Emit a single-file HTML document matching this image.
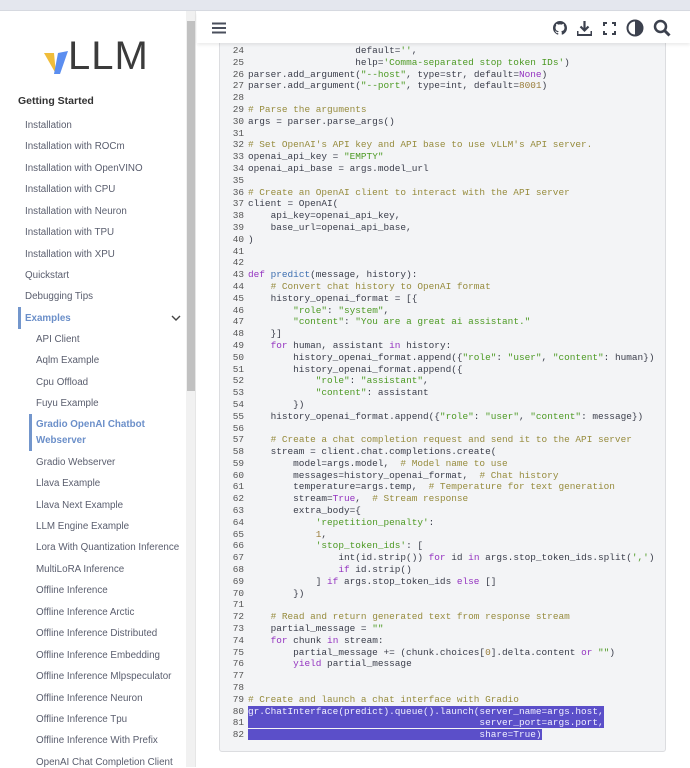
<!DOCTYPE html>
<html><head><meta charset="utf-8"><style>
*{margin:0;padding:0;box-sizing:border-box}
body{width:690px;height:767px;overflow:hidden;background:#fff;position:relative;font-family:"Liberation Sans",sans-serif}
.topbar{position:absolute;left:0;top:0;width:690px;height:11px;background:#e4e7ee;border-bottom:1px solid #d6d9e0;z-index:5}
.side{position:absolute;left:0;top:11px;width:186px;height:756px;background:#fff}
.sb{position:absolute;left:186px;top:11px;width:10px;height:756px;background:#f1f1f1;border-right:1px solid #e6e6e6}
.sb i{position:absolute;left:1px;top:10px;width:8px;height:370px;background:#c1c1c1}
.logo{position:absolute;left:44px;top:23px;font-size:40px;color:#3b3b3b;letter-spacing:1px}
.gs{position:absolute;left:18px;top:95px;font-size:10.5px;font-weight:bold;color:#333}
.it{position:absolute;font-size:9.8px;color:#5a5e6e;white-space:nowrap}
.act{color:#6b8fc9;font-weight:bold}
.bar{position:absolute;width:3px;background:#7396cc}
.hdr{position:absolute;left:197px;top:12px;width:493px;height:31px;background:#fff;box-shadow:0 2px 3px rgba(0,0,0,.08);z-index:3}
.code{position:absolute;left:219px;top:12px;width:447px;height:740px;background:#f3f4f6;border:1px solid #dcdde0;border-radius:3px}
pre{position:absolute;left:222px;top:45px;font-family:"Liberation Mono",monospace;font-size:9.42px;line-height:11.8px;color:#3a3d4a}
.n{display:inline-block;width:22px;text-align:right;margin-right:4px;color:#555}
.c{color:#978c3e}.s{color:#4d9a24}.k{color:#9434c0}.f{color:#3d6fb0}.m{color:#9a7d3a}
.sel{background:#5b4fc9;color:#f0f0ff}
</style></head><body>
<div class="topbar"></div>
<div class="side">
<div class="logo"><svg width="28" height="26" style="position:absolute;left:0;top:16px" viewBox="0 0 28 26"><polygon points="0,3 10,3 12,24" fill="#f0bd3a"/><polygon points="14,3 24,1 16,24 10,24" fill="#5b8ef0"/></svg><span style="margin-left:24px">LLM</span></div>
</div>
<div class="gs">Getting Started</div>
<div class="it" style="left:25px;top:120px">Installation</div>
<div class="it" style="left:25px;top:141px">Installation with ROCm</div>
<div class="it" style="left:25px;top:163px">Installation with OpenVINO</div>
<div class="it" style="left:25px;top:184px">Installation with CPU</div>
<div class="it" style="left:25px;top:206px">Installation with Neuron</div>
<div class="it" style="left:25px;top:227px">Installation with TPU</div>
<div class="it" style="left:25px;top:249px">Installation with XPU</div>
<div class="it" style="left:25px;top:270px">Quickstart</div>
<div class="it" style="left:25px;top:291px">Debugging Tips</div>
<div class="bar" style="left:18px;top:307px;height:22px"></div>
<div class="it act" style="left:25px;top:313px">Examples</div>
<svg style="position:absolute;left:171px;top:315px" width="10" height="7" viewBox="0 0 10 7"><path d="M1 1 L5 5 L9 1" stroke="#444" stroke-width="1.4" fill="none"/></svg>
<div class="it" style="left:36px;top:334px">API Client</div>
<div class="it" style="left:36px;top:355px">Aqlm Example</div>
<div class="it" style="left:36px;top:377px">Cpu Offload</div>
<div class="it" style="left:36px;top:398px">Fuyu Example</div>
<div class="bar" style="left:29px;top:414px;height:37px"></div>
<div class="it act" style="left:36px;top:419px">Gradio OpenAI Chatbot</div>
<div class="it act" style="left:36px;top:435px">Webserver</div>
<div class="it" style="left:36px;top:457px">Gradio Webserver</div>
<div class="it" style="left:36px;top:478px">Llava Example</div>
<div class="it" style="left:36px;top:500px">Llava Next Example</div>
<div class="it" style="left:36px;top:521px">LLM Engine Example</div>
<div class="it" style="left:36px;top:542px">Lora With Quantization Inference</div>
<div class="it" style="left:36px;top:564px">MultiLoRA Inference</div>
<div class="it" style="left:36px;top:585px">Offline Inference</div>
<div class="it" style="left:36px;top:607px">Offline Inference Arctic</div>
<div class="it" style="left:36px;top:628px">Offline Inference Distributed</div>
<div class="it" style="left:36px;top:650px">Offline Inference Embedding</div>
<div class="it" style="left:36px;top:671px">Offline Inference Mlpspeculator</div>
<div class="it" style="left:36px;top:693px">Offline Inference Neuron</div>
<div class="it" style="left:36px;top:714px">Offline Inference Tpu</div>
<div class="it" style="left:36px;top:735px">Offline Inference With Prefix</div>
<div class="it" style="left:36px;top:757px">OpenAI Chat Completion Client</div>
<div class="sb"><i></i></div>
<div class="code"></div>
<pre><span class="n">24</span>                   default=<span class="s">''</span>,
<span class="n">25</span>                   help=<span class="s">'Comma-separated stop token IDs'</span>)
<span class="n">26</span>parser.add_argument(<span class="s">"--host"</span>, type=str, default=<span class="k">None</span>)
<span class="n">27</span>parser.add_argument(<span class="s">"--port"</span>, type=int, default=<span class="m">8001</span>)
<span class="n">28</span>
<span class="n">29</span><span class="c"># Parse the arguments</span>
<span class="n">30</span>args = parser.parse_args()
<span class="n">31</span>
<span class="n">32</span><span class="c"># Set OpenAI's API key and API base to use vLLM's API server.</span>
<span class="n">33</span>openai_api_key = <span class="s">"EMPTY"</span>
<span class="n">34</span>openai_api_base = args.model_url
<span class="n">35</span>
<span class="n">36</span><span class="c"># Create an OpenAI client to interact with the API server</span>
<span class="n">37</span>client = OpenAI(
<span class="n">38</span>    api_key=openai_api_key,
<span class="n">39</span>    base_url=openai_api_base,
<span class="n">40</span>)
<span class="n">41</span>
<span class="n">42</span>
<span class="n">43</span><span class="k">def</span> <span class="f">predict</span>(message, history):
<span class="n">44</span>    <span class="c"># Convert chat history to OpenAI format</span>
<span class="n">45</span>    history_openai_format = [{
<span class="n">46</span>        <span class="s">"role"</span>: <span class="s">"system"</span>,
<span class="n">47</span>        <span class="s">"content"</span>: <span class="s">"You are a great ai assistant."</span>
<span class="n">48</span>    }]
<span class="n">49</span>    <span class="k">for</span> human, assistant <span class="k">in</span> history:
<span class="n">50</span>        history_openai_format.append({<span class="s">"role"</span>: <span class="s">"user"</span>, <span class="s">"content"</span>: human})
<span class="n">51</span>        history_openai_format.append({
<span class="n">52</span>            <span class="s">"role"</span>: <span class="s">"assistant"</span>,
<span class="n">53</span>            <span class="s">"content"</span>: assistant
<span class="n">54</span>        })
<span class="n">55</span>    history_openai_format.append({<span class="s">"role"</span>: <span class="s">"user"</span>, <span class="s">"content"</span>: message})
<span class="n">56</span>
<span class="n">57</span>    <span class="c"># Create a chat completion request and send it to the API server</span>
<span class="n">58</span>    stream = client.chat.completions.create(
<span class="n">59</span>        model=args.model,  <span class="c"># Model name to use</span>
<span class="n">60</span>        messages=history_openai_format,  <span class="c"># Chat history</span>
<span class="n">61</span>        temperature=args.temp,  <span class="c"># Temperature for text generation</span>
<span class="n">62</span>        stream=<span class="k">True</span>,  <span class="c"># Stream response</span>
<span class="n">63</span>        extra_body={
<span class="n">64</span>            <span class="s">'repetition_penalty'</span>:
<span class="n">65</span>            <span class="m">1</span>,
<span class="n">66</span>            <span class="s">'stop_token_ids'</span>: [
<span class="n">67</span>                int(id.strip()) <span class="k">for</span> id <span class="k">in</span> args.stop_token_ids.split(<span class="s">','</span>)
<span class="n">68</span>                <span class="k">if</span> id.strip()
<span class="n">69</span>            ] <span class="k">if</span> args.stop_token_ids <span class="k">else</span> []
<span class="n">70</span>        })
<span class="n">71</span>
<span class="n">72</span>    <span class="c"># Read and return generated text from response stream</span>
<span class="n">73</span>    partial_message = <span class="s">""</span>
<span class="n">74</span>    <span class="k">for</span> chunk <span class="k">in</span> stream:
<span class="n">75</span>        partial_message += (chunk.choices[<span class="m">0</span>].delta.content <span class="k">or</span> <span class="s">""</span>)
<span class="n">76</span>        <span class="k">yield</span> partial_message
<span class="n">77</span>
<span class="n">78</span>
<span class="n">79</span><span class="c"># Create and launch a chat interface with Gradio</span>
<span class="n">80</span><span class="sel">gr.ChatInterface(predict).queue().launch(server_name=args.host,</span>
<span class="n">81</span><span class="sel">                                         server_port=args.port,</span>
<span class="n">82</span><span class="sel">                                         share=True)</span></pre>
<div class="hdr">
<svg style="position:absolute;left:15px;top:10px" width="14" height="12" viewBox="0 0 14 12"><path d="M0 1.5H14M0 6H14M0 10.5H14" stroke="#4a4f5c" stroke-width="2"/></svg>
<svg style="position:absolute;left:356px;top:9px" width="14" height="14" viewBox="0 0 16 16"><path fill="#3c414e" d="M8 0C3.6 0 0 3.6 0 8c0 3.5 2.3 6.5 5.5 7.6.4.1.5-.2.5-.4v-1.4c-2.2.5-2.7-1-2.7-1-.4-.9-.9-1.2-.9-1.2-.7-.5.1-.5.1-.5.8.1 1.200.8 1.2.8.7 1.2 1.9.9 2.3.7.1-.5.3-.9.5-1.1-1.8-.2-3.6-.9-3.6-4 0-.9.3-1.6.8-2.1-.1-.2-.4-1 .1-2.1 0 0 .7-.2 2.2.8.6-.2 1.3-.3 2-.3s1.4.1 2 .3c1.5-1 2.2-.8 2.2-.8.4 1.1.2 1.9.1 2.1.5.6.8 1.3.8 2.1 0 3.1-1.9 3.8-3.6 4 .3.3.5.8.5 1.5v2.2c0 .2.1.5.6.4C13.7 14.5 16 11.5 16 8c0-4.4-3.6-8-8-8z"/></svg>
<svg style="position:absolute;left:380px;top:8px" width="15" height="16" viewBox="0 0 15 16"><path d="M7.5 1V10M3.5 6.5L7.5 10.5L11.5 6.5" stroke="#3c414e" stroke-width="2.2" fill="none"/><path d="M0.5 11V15H14.5V11" stroke="#3c414e" stroke-width="2" fill="none"/></svg>
<svg style="position:absolute;left:406px;top:10px" width="13" height="13" viewBox="0 0 13 13"><path d="M1 4V1H4M9 1H12V4M12 9V12H9M4 12H1V9" stroke="#3c414e" stroke-width="2" fill="none"/></svg>
<svg style="position:absolute;left:429px;top:7px" width="18" height="18" viewBox="0 0 18 18"><circle cx="9" cy="9" r="7.5" stroke="#3c414e" stroke-width="2" fill="none"/><path d="M9 1.5A7.5 7.5 0 0 1 9 16.5Z" fill="#3c414e"/></svg>
<svg style="position:absolute;left:456px;top:7px" width="18" height="18" viewBox="0 0 18 18"><circle cx="7.5" cy="7.5" r="5.5" stroke="#3c414e" stroke-width="2.5" fill="none"/><path d="M11.5 11.5L16.5 16.5" stroke="#3c414e" stroke-width="3"/></svg>
</div>
</body></html>
